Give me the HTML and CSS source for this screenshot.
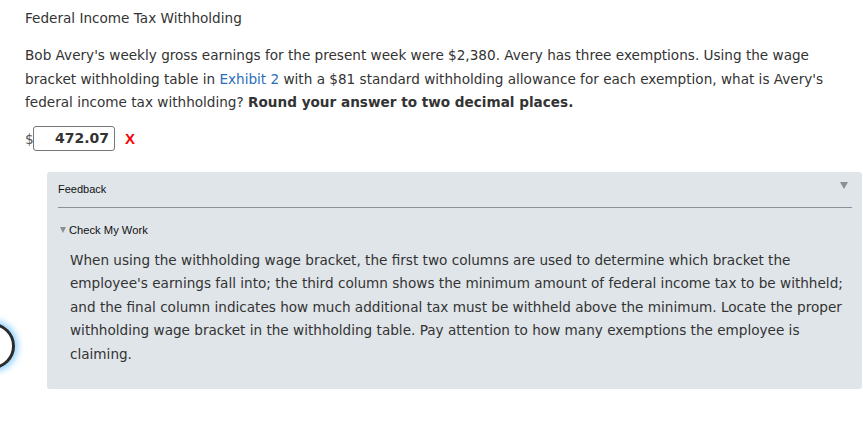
FILE: index.html
```html
<!DOCTYPE html>
<html>
<head>
<meta charset="utf-8">
<link rel="stylesheet" href="styles.css">
</head>
<body>
<div class="page">
  <div class="title">Federal Income Tax Withholding</div>
  <p class="question">Bob Avery's weekly gross earnings for the present week were $2,380. Avery has three exemptions. Using the wage bracket withholding table in <a class="link" href="#">Exhibit 2</a> with a $81 standard withholding allowance for each exemption, what is Avery's federal income tax withholding? <b>Round your answer to two decimal places.</b></p>
  <div class="answer">
    <span class="dollar">$</span>
    <span class="input">472.07</span>
    <span class="wrong">X</span>
  </div>
  <div class="feedback">
    <div class="fb-head">
      <span class="fb-label">Feedback</span>
      <span class="fb-arrow"></span>
    </div>
    <div class="cmw"><span class="cmw-arrow"></span>Check My Work</div>
    <p class="fb-text">When using the withholding wage bracket, the first two columns are used to determine which bracket the employee's earnings fall into; the third column shows the minimum amount of federal income tax to be withheld; and the final column indicates how much additional tax must be withheld above the minimum. Locate the proper withholding wage bracket in the withholding table. Pay attention to how many exemptions the employee is claiming.</p>
  </div>
  <div class="ring"></div>
</div>
</body>
</html>
```

FILE: styles.css
```css
html, body {
  margin: 0;
  padding: 0;
  background: #fff;
}
body {
  font-family: "DejaVu Sans", Verdana, sans-serif;
  color: #333;
  font-size: 13.6px;
  overflow: hidden;
}
.page {
  position: relative;
  padding: 9px 0 0 25px;
  width: 838px;
  height: 423px;
}
.title {
  line-height: 18px;
  height: 18px;
}
.question {
  margin: 17px 0 0 0;
  line-height: 23.5px;
  width: 800px;
}
.link {
  color: #2a6ebb;
  text-decoration: none;
}
.answer {
  display: flex;
  align-items: center;
  margin-top: 11px;
  height: 26px;
}
.dollar {
  color: #555;
  width: 8px;
}
.input {
  box-sizing: border-box;
  width: 82px;
  height: 25px;
  border: 1px solid #777;
  border-radius: 3px;
  text-align: right;
  font-weight: bold;
  padding: 0 5px;
  line-height: 23px;
  font-size: 14px;
  color: #333;
}
.wrong {
  color: #ff0000;
  font-family: "Liberation Sans", Arial, sans-serif;
  font-weight: bold;
  font-size: 15px;
  margin-left: 10px;
}
.feedback {
  margin: 20px 0 0 22px;
  width: 815px;
  height: 217px;
  box-sizing: border-box;
  background: #dfe5e9;
  border-radius: 3px;
  padding: 0 10px 0 11px;
}
.fb-head {
  display: flex;
  justify-content: space-between;
  align-items: center;
  height: 35px;
  border-bottom: 1px solid #8b9196;
  font-family: "Liberation Sans", Arial, sans-serif;
  font-size: 11px;
  color: #111;
}
.fb-arrow {
  width: 0;
  height: 0;
  border-left: 4px solid transparent;
  border-right: 4px solid transparent;
  border-top: 7px solid #8a8f93;
  margin-right: 4px;
  margin-top: -8px;
}
.cmw {
  display: flex;
  align-items: center;
  margin-top: 15px;
  font-family: "Liberation Sans", Arial, sans-serif;
  font-size: 11.2px;
  color: #111;
  height: 14px;
}
.cmw-arrow {
  width: 0;
  height: 0;
  border-left: 3.5px solid transparent;
  border-right: 3.5px solid transparent;
  border-top: 6px solid #8a8f93;
  margin: 0 3px 0 2px;
}
.fb-text {
  margin: 12px 0 0 12px;
  line-height: 23.6px;
  width: 780px;
}
.ring {
  position: absolute;
  left: -31px;
  top: 323px;
  width: 40px;
  height: 40px;
  border: 3px solid #2b2b2b;
  border-radius: 50%;
  box-shadow: 0 0 6px 3px rgba(80, 180, 255, 0.6);
  background: #fff;
}
```
